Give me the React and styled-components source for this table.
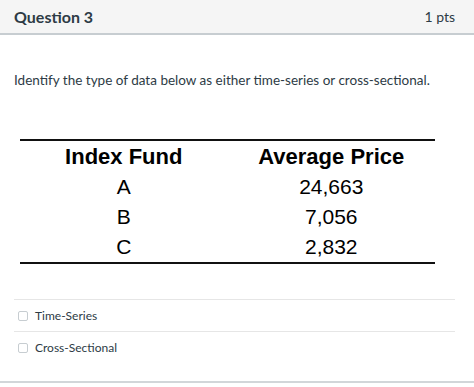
import styled, { createGlobalStyle } from "styled-components";

const GlobalStyle = createGlobalStyle`
  body {
    margin: 0;
    background: #fff;
    font-family: Lato, "Open Sans", sans-serif;
    color: #2d3b45;
  }
`;

const Card = styled.div`
  width: 474px;
  height: 383px;
  box-sizing: border-box;
  border-bottom: 2px solid #d2d6d9;
  overflow: hidden;
`;

const Header = styled.header`
  height: 35px;
  box-sizing: border-box;
  display: flex;
  align-items: center;
  justify-content: space-between;
  padding: 0 19px 0 14px;
  background: #f5f5f5;
  border-bottom: 2px solid #c7cdd1;
`;

const Title = styled.h2`
  margin: 0;
  font-size: 16px;
  font-weight: 700;
  color: #2d3b45;
`;

const Points = styled.span`
  font-size: 14px;
  color: #2d3b45;
`;

const Body = styled.div`
  padding: 35px 19px 0 14px;
`;

const Prompt = styled.p`
  margin: 0;
  font-size: 13.5px;
  line-height: 20px;
`;

const DataTable = styled.table`
  margin: 49px 0 0 6px;
  width: 415px;
  border-collapse: collapse;
  border-top: 2px solid #111;
  border-bottom: 2px solid #111;
  font-family: "Liberation Sans", Arial, sans-serif;
  color: #000;
  table-layout: fixed;
`;

const HeadCell = styled.th`
  height: 31px;
  padding: 0;
  font-size: 22px;
  font-weight: 700;
  line-height: 31px;
  text-align: center;
`;

const Cell = styled.td`
  height: 30px;
  padding: 0;
  font-size: 21px;
  line-height: 30px;
  text-align: center;
`;

const Answers = styled.ul`
  list-style: none;
  margin: 35px 0 0;
  padding: 0;
`;

const Answer = styled.li`
  display: flex;
  align-items: center;
  gap: 7px;
  height: 31px;
  padding-left: 4px;
  border-top: 1px solid #e6e6e6;
  font-size: 12px;
`;

const Box = styled.span`
  width: 10px;
  height: 10px;
  box-sizing: border-box;
  border: 1px solid #c7cdd1;
  border-radius: 2px;
  background: #fff;
`;

const rows = [
  ["A", "24,663"],
  ["B", "7,056"],
  ["C", "2,832"],
];

function App() {
  return (
    <Card>
      <GlobalStyle />
      <Header>
        <Title>Question 3</Title>
        <Points>1 pts</Points>
      </Header>
      <Body>
        <Prompt>
          Identify the type of data below as either time-series or
          cross-sectional.
        </Prompt>
        <DataTable>
          <thead>
            <tr>
              <HeadCell>Index Fund</HeadCell>
              <HeadCell>Average Price</HeadCell>
            </tr>
          </thead>
          <tbody>
            {rows.map(([fund, price]) => (
              <tr key={fund}>
                <Cell>{fund}</Cell>
                <Cell>{price}</Cell>
              </tr>
            ))}
          </tbody>
        </DataTable>
        <Answers>
          <Answer>
            <Box />
            Time-Series
          </Answer>
          <Answer>
            <Box />
            Cross-Sectional
          </Answer>
        </Answers>
      </Body>
    </Card>
  );
}

export default App;
